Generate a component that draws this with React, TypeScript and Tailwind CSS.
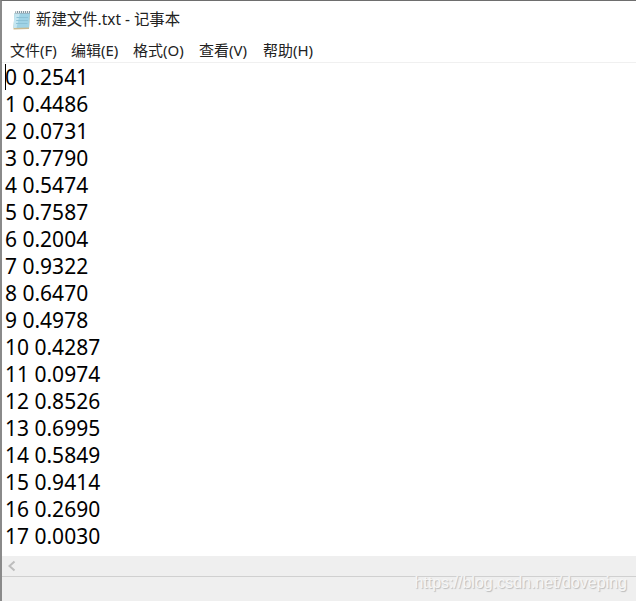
const lines = [
  '0 0.2541', '1 0.4486', '2 0.0731', '3 0.7790', '4 0.5474', '5 0.7587',
  '6 0.2004', '7 0.9322', '8 0.6470', '9 0.4978', '10 0.4287', '11 0.0974',
  '12 0.8526', '13 0.6995', '14 0.5849', '15 0.9414', '16 0.2690', '17 0.0030',
];

const menus = [
  { label: '文件(F)', width: 'w-[61px]' },
  { label: '编辑(E)', width: 'w-[62px]' },
  { label: '格式(O)', width: 'w-[66px]' },
  { label: '查看(V)', width: 'w-[64px]' },
  { label: '帮助(H)', width: 'w-[60px]' },
];

const font = { fontFamily: '"Noto Sans", "Noto Sans CJK SC", sans-serif' };

function NotepadIcon() {
  return (
    <svg width="20" height="20" viewBox="0 0 20 20">
      <path d="M2.5 3 L18 3 L17 19 L1.5 19.5 Z" fill="#c9b98f" />
      <path d="M2.5 3 L18 3 L17 17.5 L1.5 18 Z" fill="#9fd3e6" />
      <path d="M2.5 3 L8 3 L4.5 18 L1.5 18 Z" fill="#c4e6f1" />
      <path d="M3.5 1 H18 V3.5 H3 Z" fill="#8a9aa3" />
      <path d="M4.5 1 V3 M6.5 1 V3 M8.5 1 V3 M10.5 1 V3 M12.5 1 V3 M14.5 1 V3 M16.5 1 V3" stroke="#e8eef0" strokeWidth="1" />
      <path d="M4.5 7.5 H16 M4.2 10.5 H15.8 M4 13.5 H15.5" stroke="#8cc2d6" strokeWidth="1" />
    </svg>
  );
}

export default function App() {
  return (
    <div className="w-[636px] h-[601px] bg-white flex flex-col overflow-hidden border-t border-l-2 border-t-[#6e6e6e] border-l-[#8a8a8a]" style={font}>
      <div className="h-[37px] flex items-center pl-[10px] gap-[4px] shrink-0">
        <NotepadIcon />
        <span className="text-[15.4px] text-[#222]">新建文件.txt - 记事本</span>
      </div>
      <div className="h-[24px] flex items-center pl-[8px] shrink-0 text-[15px] text-[#222]">
        {menus.map((m) => (
          <span key={m.label} className={`${m.width} whitespace-nowrap`}>{m.label}</span>
        ))}
      </div>
      <div className="h-[1px] bg-[#f0f0f0] shrink-0" />
      <div className="relative flex-1 pl-[3px] pt-[1px] text-[21px] leading-[27px] text-black">
        <div className="absolute left-[3px] top-[1px] w-[1px] h-[26px] bg-black" />
        {lines.map((l) => (
          <div key={l} className="whitespace-pre">{l}</div>
        ))}
      </div>
      <div className="relative h-[20px] bg-[#efefef] flex items-center pl-[5px] shrink-0">
        <svg width="10" height="12" viewBox="0 0 10 12">
          <path d="M7.5 1.5 L2.5 6 L7.5 10.5" fill="none" stroke="#bdbdbd" strokeWidth="2" />
        </svg>
      </div>
      <div className="relative h-[25px] bg-[#efefef] border-t border-[#d0d0d0] shrink-0">
        <span
          className="absolute right-[9px] top-[-6px] text-[16px] text-[#f6f6f6]"
          style={{ fontFamily: '"Liberation Sans", sans-serif', textShadow: '1px 1px 1px #bbb' }}
        >
          https://blog.csdn.net/doveping
        </span>
      </div>
    </div>
  );
}
